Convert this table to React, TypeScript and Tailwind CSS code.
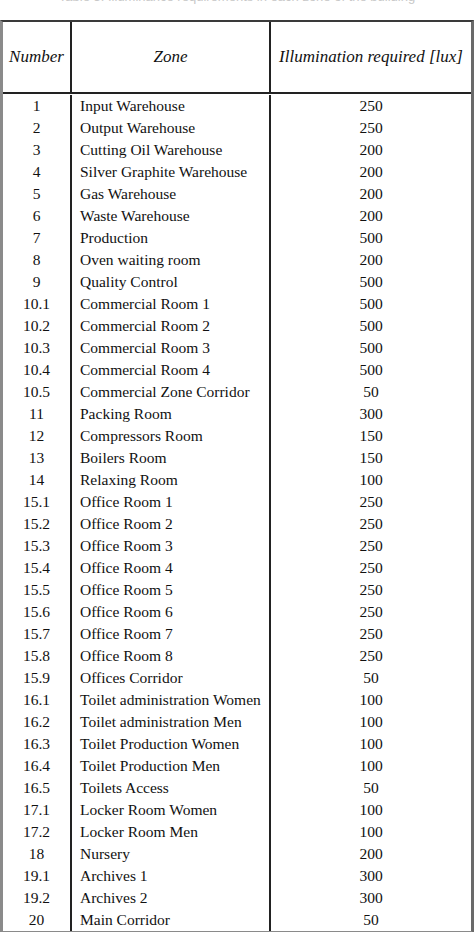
import React from 'react';

type Row = [string, string, string];

const rows: Row[] = [
  ['1', 'Input Warehouse', '250'],
  ['2', 'Output Warehouse', '250'],
  ['3', 'Cutting Oil Warehouse', '200'],
  ['4', 'Silver Graphite Warehouse', '200'],
  ['5', 'Gas Warehouse', '200'],
  ['6', 'Waste Warehouse', '200'],
  ['7', 'Production', '500'],
  ['8', 'Oven waiting room', '200'],
  ['9', 'Quality Control', '500'],
  ['10.1', 'Commercial Room 1', '500'],
  ['10.2', 'Commercial Room 2', '500'],
  ['10.3', 'Commercial Room 3', '500'],
  ['10.4', 'Commercial Room 4', '500'],
  ['10.5', 'Commercial Zone Corridor', '50'],
  ['11', 'Packing Room', '300'],
  ['12', 'Compressors Room', '150'],
  ['13', 'Boilers Room', '150'],
  ['14', 'Relaxing Room', '100'],
  ['15.1', 'Office Room 1', '250'],
  ['15.2', 'Office Room 2', '250'],
  ['15.3', 'Office Room 3', '250'],
  ['15.4', 'Office Room 4', '250'],
  ['15.5', 'Office Room 5', '250'],
  ['15.6', 'Office Room 6', '250'],
  ['15.7', 'Office Room 7', '250'],
  ['15.8', 'Office Room 8', '250'],
  ['15.9', 'Offices Corridor', '50'],
  ['16.1', 'Toilet administration Women', '100'],
  ['16.2', 'Toilet administration Men', '100'],
  ['16.3', 'Toilet Production Women', '100'],
  ['16.4', 'Toilet Production Men', '100'],
  ['16.5', 'Toilets Access', '50'],
  ['17.1', 'Locker Room Women', '100'],
  ['17.2', 'Locker Room Men', '100'],
  ['18', 'Nursery', '200'],
  ['19.1', 'Archives 1', '300'],
  ['19.2', 'Archives 2', '300'],
  ['20', 'Main Corridor', '50'],
];

export default function App() {
  return (
    <div className="w-[474px] h-[932px] overflow-hidden bg-white">
      {/* caption, its top is cropped away in the source */}
      <div className="h-[20px] overflow-hidden">
        <p className="-mt-[11px] text-center text-[13px] leading-[16px] text-[#c8c8c8] font-['Liberation_Sans',sans-serif]">
          Table 3. Illuminance requirements in each zone of the building
        </p>
      </div>
      <div className="border-t-2 border-t-[#3a3a3a] border-l-[3px] border-l-[#8a8a8a] border-r-[3px] border-r-[#6a6a6a] border-b-2 border-b-[#8a8a8a] font-['Liberation_Serif',serif] text-[15.5px] text-[#111]">
        <div className="flex h-[72px] border-b-2 border-[#222] italic text-[17px]">
          <div className="w-[69px] flex items-center justify-center border-r-2 border-[#222]">Number</div>
          <div className="w-[199px] flex items-center justify-center border-r-2 border-[#222]">Zone</div>
          <div className="flex-1 flex items-center justify-center">Illumination required [lux]</div>
        </div>
        <div className="pt-[1px]">
          {rows.map(([num, zone, lux]) => (
            <div key={num} className="flex h-[22px] leading-[22px]">
              <div className="w-[69px] text-center border-r-2 border-[#222]">{num}</div>
              <div className="w-[199px] pl-[8px] border-r-2 border-[#222] whitespace-nowrap">{zone}</div>
              <div className="flex-1 text-center">{lux}</div>
            </div>
          ))}
        </div>
      </div>
    </div>
  );
}
